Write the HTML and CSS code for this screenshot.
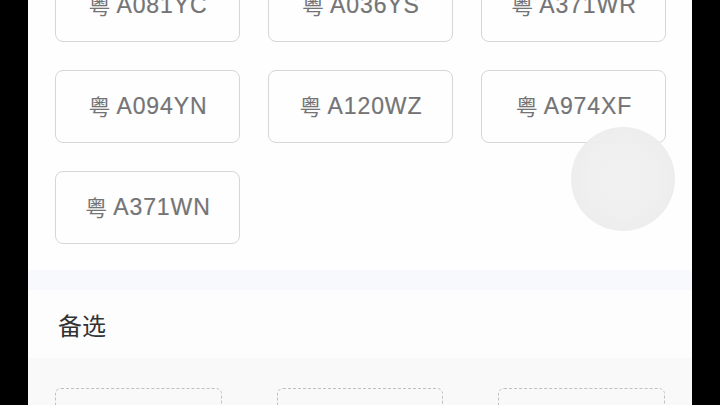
FILE: index.html
```html
<!DOCTYPE html>
<html lang="zh">
<head>
<meta charset="utf-8">
<link rel="stylesheet" href="styles.css">
</head>
<body>
<div class="page">
  <section class="plates">
    <div class="grid">
      <div class="plate"><span class="prov">粤</span><span class="num">A081YC</span></div>
      <div class="plate"><span class="prov">粤</span><span class="num">A036YS</span></div>
      <div class="plate"><span class="prov">粤</span><span class="num">A371WR</span></div>
      <div class="plate"><span class="prov">粤</span><span class="num">A094YN</span></div>
      <div class="plate"><span class="prov">粤</span><span class="num">A120WZ</span></div>
      <div class="plate"><span class="prov">粤</span><span class="num">A974XF</span></div>
      <div class="plate"><span class="prov">粤</span><span class="num">A371WN</span></div>
    </div>
  </section>
  <div class="band"></div>
  <header class="section-head">备选</header>
  <section class="alts">
    <div class="alt"></div>
    <div class="alt"></div>
    <div class="alt"></div>
  </section>
  <div class="float-btn"></div>
</div>
</body>
</html>
```
FILE: styles.css
```css
html, body {
  margin: 0;
  padding: 0;
  background: #000;
  height: 405px;
  overflow: hidden;
}
.page {
  position: relative;
  margin: 0 28px;
  width: 664px;
  height: 405px;
  background: #fdfdfe;
  overflow: hidden;
  font-family: "Liberation Sans", "Noto Sans CJK SC", sans-serif;
}
.plates {
  padding: 0 27px 26px 27px;
  background: #fefefe;
}
.grid {
  margin-top: -31px;
  display: grid;
  grid-template-columns: repeat(3, 185px);
  column-gap: 28px;
  row-gap: 28px;
}
.plate {
  box-sizing: border-box;
  height: 73px;
  border: 1.5px solid #d6d6d8;
  border-radius: 8px;
  background: #fefefe;
  display: flex;
  align-items: center;
  justify-content: center;
  color: #747476;
}
.prov {
  font-family: "Noto Sans CJK SC", sans-serif;
  font-size: 22px;
  line-height: 1;
  margin-right: 6px;
  margin-bottom: 4px;
}
.num {
  font-size: 23px;
  line-height: 1;
  letter-spacing: 0.9px;
  margin-right: -0.9px;
  -webkit-text-stroke: 0.2px #747476;
}
.band {
  height: 20px;
  background: #f7f9fc;
}
.section-head {
  height: 68px;
  box-sizing: border-box;
  padding-left: 30px;
  display: flex;
  align-items: center;
  background: #fefdfe;
  font-family: "Noto Sans CJK SC", sans-serif;
  font-size: 24px;
  color: #333;
}
.alts {
  background: #f9f9fa;
  padding: 30px 27px 0 27px;
  display: flex;
  gap: 55px;
  height: 100px;
}
.alt {
  box-sizing: border-box;
  width: 167px;
  height: 80px;
  border: 1.5px dashed #c0c0c2;
  border-radius: 6px;
}
.float-btn {
  position: absolute;
  left: 543px;
  top: 127px;
  width: 104px;
  height: 104px;
  border-radius: 50%;
  background: radial-gradient(circle, rgba(240,240,241,0.95) 0%, rgba(239,239,240,0.95) 45%, rgba(233,233,235,0.93) 100%);
}
```
